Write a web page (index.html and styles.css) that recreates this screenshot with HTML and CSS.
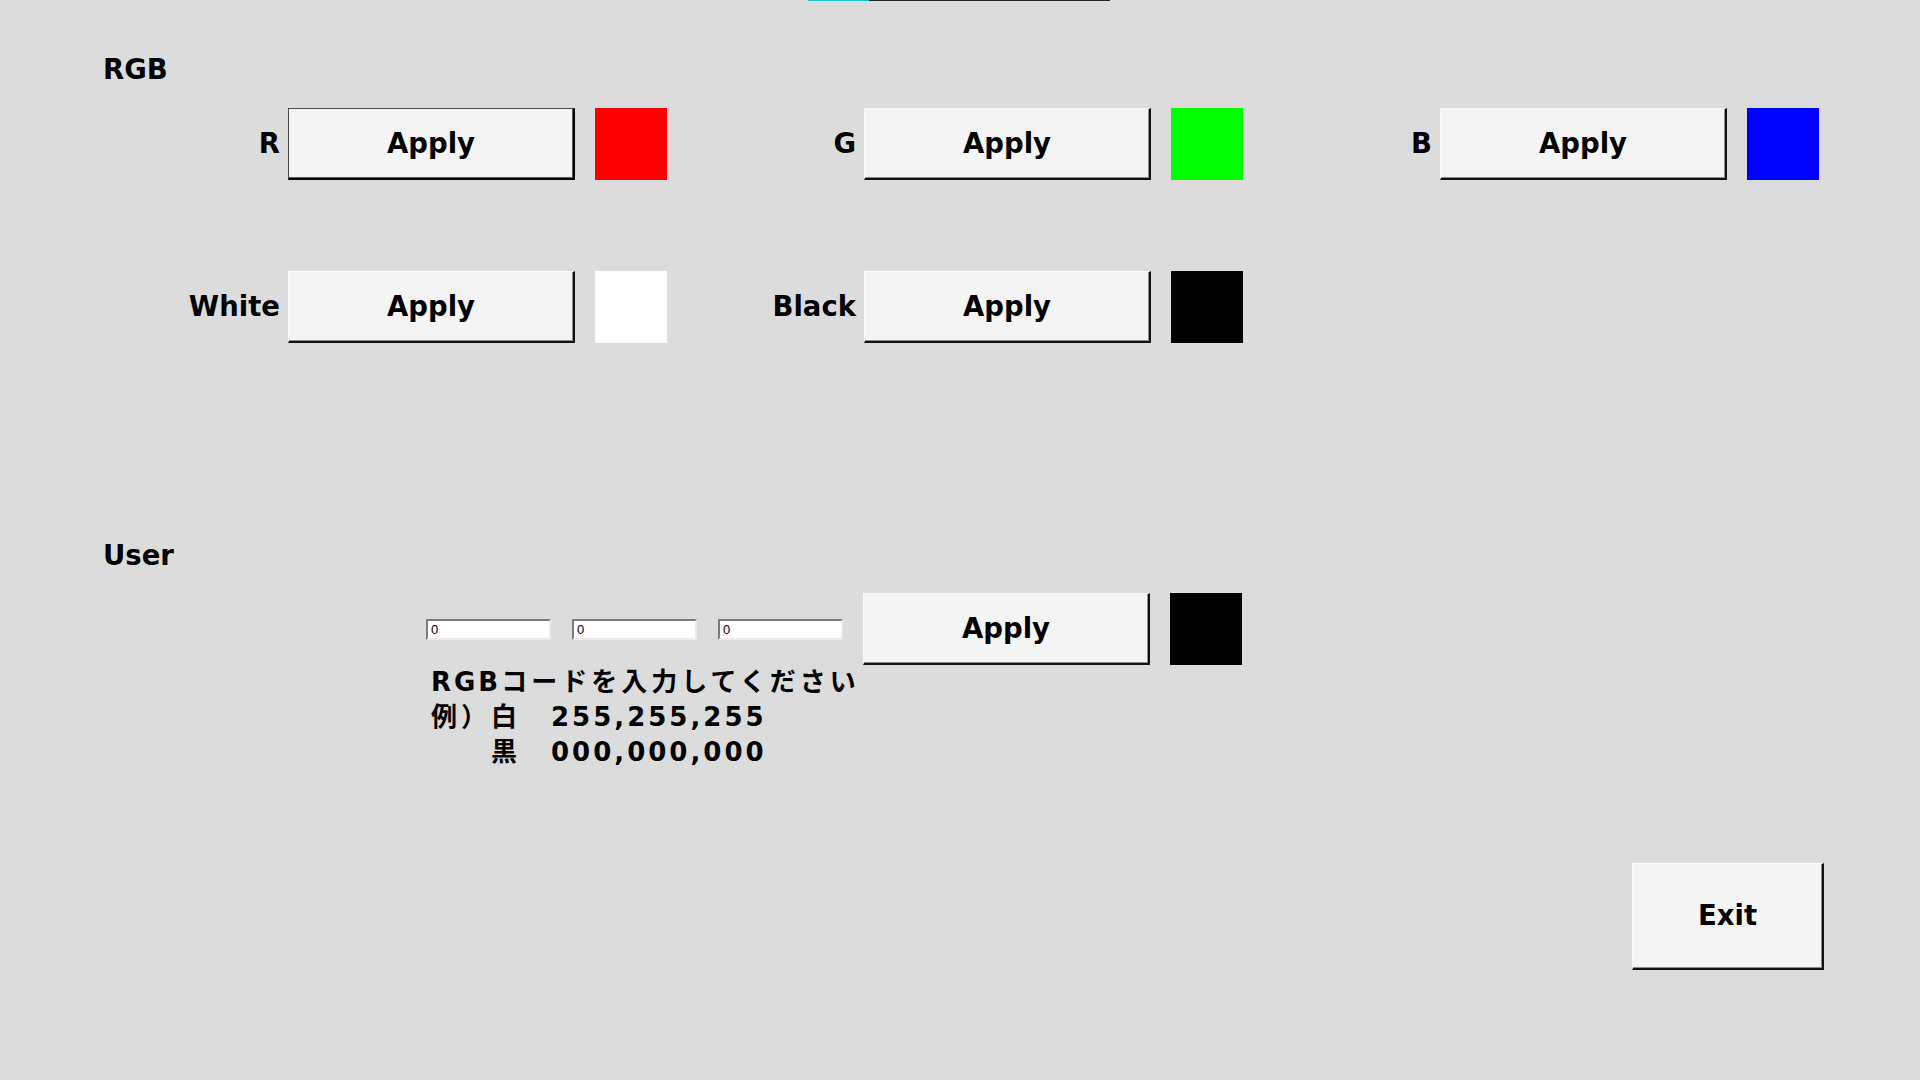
FILE: index.html
```html
<!DOCTYPE html>
<html lang="ja">
<head>
  <meta charset="UTF-8" />
  <title>Color Check</title>
  <link rel="stylesheet" href="styles.css">
</head>
<body>
  <div class="progress">
    <div class="progress-done"></div>
    <div class="progress-rest"></div>
  </div>

  <div class="page">
    <div class="section-title">RGB</div>
    <div class="color-grid">
      <div class="color-group">
        <span class="color-label">R</span>
        <button class="apply-btn focused">Apply</button>
        <div class="swatch" style="background:#ff0000"></div>
      </div>
      <div class="color-group">
        <span class="color-label">G</span>
        <button class="apply-btn">Apply</button>
        <div class="swatch" style="background:#00ff00"></div>
      </div>
      <div class="color-group">
        <span class="color-label">B</span>
        <button class="apply-btn">Apply</button>
        <div class="swatch" style="background:#0000ff"></div>
      </div>
      <div class="color-group">
        <span class="color-label">White</span>
        <button class="apply-btn">Apply</button>
        <div class="swatch" style="background:#ffffff"></div>
      </div>
      <div class="color-group">
        <span class="color-label">Black</span>
        <button class="apply-btn">Apply</button>
        <div class="swatch" style="background:#000000"></div>
      </div>
    </div>

    <div class="section-title user-title">User</div>
    <div class="user-row">
      <input class="rgb-input" type="text" value="0">
      <input class="rgb-input" type="text" value="0">
      <input class="rgb-input" type="text" value="0">
      <button class="apply-btn">Apply</button>
      <div class="swatch" style="background:#000000"></div>
    </div>
    <div class="hint">
      <div><span class="hint-latin">RGB</span><span class="hint-kana">コードを入力してください</span></div>
      <div class="hint-example">例）白　<span class="hint-num">255,255,255</span></div>
      <div class="hint-example">　　黒　<span class="hint-num">000,000,000</span></div>
    </div>

    <div class="footer">
      <button class="exit-btn">Exit</button>
    </div>
  </div>
</body>
</html>
```

FILE: styles.css
```css
body {
  margin: 0;
  background-color: #dcdcdc;
  font-family: "DejaVu Sans", "Noto Sans CJK JP", sans-serif;
  font-weight: bold;
  font-size: 27.5px;
  color: #000;
}
.progress {
  display: flex;
  margin-left: 808px;
  width: 302px;
  height: 1px;
}
.progress-done {
  width: 61px;
  background-color: #1ec0d0;
}
.progress-rest {
  flex: 1;
  background-color: #222;
}
.page {
  padding: 0 96px 0 103px;
}
.section-title {
  line-height: 32px;
  margin-top: 52px;
}
.user-title {
  margin-top: 196px;
}
.color-grid {
  display: grid;
  grid-template-columns: repeat(3, 564px);
  column-gap: 12px;
  row-gap: 91px;
  margin-top: 23px;
}
.color-group {
  display: flex;
  align-items: center;
}
.color-label {
  width: 177px;
  margin-right: 8px;
  padding-bottom: 2px;
  text-align: right;
}
.apply-btn,
.exit-btn {
  box-sizing: border-box;
  width: 287px;
  height: 72px;
  padding: 0 0 2px;
  font: inherit;
  color: #000;
  background-color: #f4f4f4;
  border-style: solid;
  border-width: 1px 2px 2px 1px;
  border-color: #f8f8f8 #111 #111 #f8f8f8;
  box-shadow: inset -1px -1px 0 #8a8a8a;
}
.apply-btn.focused {
  border-color: #4a4a4a #000 #000 #4a4a4a;
  box-shadow: inset -1px -1px 0 #5a5a5a;
}
.swatch {
  width: 72px;
  height: 72px;
  margin-left: 20px;
}
.user-row {
  display: flex;
  align-items: center;
  margin: 22px 0 0 323px;
}
.rgb-input {
  box-sizing: border-box;
  width: 125px;
  height: 21px;
  margin-right: 21px;
  padding: 0 3px;
  font-family: "Liberation Sans", sans-serif;
  font-size: 13px;
  font-weight: normal;
  background: #fff;
  border-style: solid;
  border-width: 2px;
  border-color: #7b7b7b #ececec #ececec #7b7b7b;
  outline: none;
}
.rgb-input:last-of-type {
  margin-right: 20px;
}
.hint {
  margin: 0 0 0 328px;
  font-size: 26px;
  line-height: 35px;
}
.hint-latin {
  letter-spacing: 3px;
}
.hint-kana {
  letter-spacing: 4px;
}
.hint-example {
  letter-spacing: 4px;
}
.hint-num {
  letter-spacing: 3px;
}
.footer {
  display: flex;
  justify-content: flex-end;
  margin-top: 93px;
}
.exit-btn {
  width: 192px;
  height: 107px;
}
```
